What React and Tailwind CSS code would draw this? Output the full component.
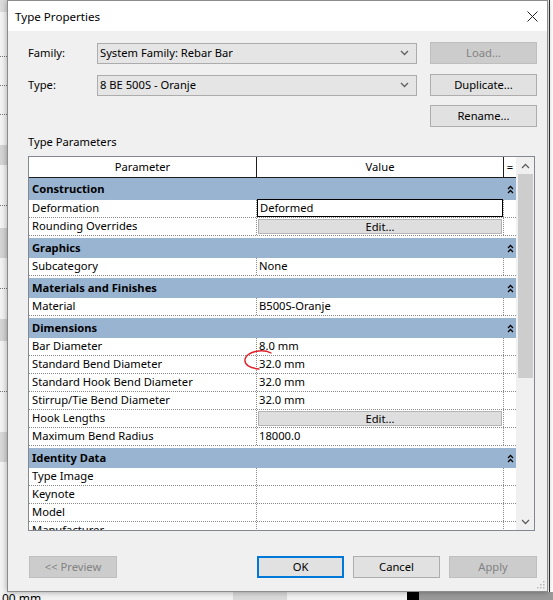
import React from 'react';

const groups = [
  {
    name: 'Construction',
    rows: [
      { p: 'Deformation', v: 'Deformed', kind: 'box' },
      { p: 'Rounding Overrides', kind: 'edit' },
    ],
  },
  { name: 'Graphics', rows: [{ p: 'Subcategory', v: 'None' }] },
  { name: 'Materials and Finishes', rows: [{ p: 'Material', v: 'B500S-Oranje' }] },
  {
    name: 'Dimensions',
    rows: [
      { p: 'Bar Diameter', v: '8.0 mm' },
      { p: 'Standard Bend Diameter', v: '32.0 mm' },
      { p: 'Standard Hook Bend Diameter', v: '32.0 mm' },
      { p: 'Stirrup/Tie Bend Diameter', v: '32.0 mm' },
      { p: 'Hook Lengths', kind: 'edit' },
      { p: 'Maximum Bend Radius', v: '18000.0' },
    ],
  },
  {
    name: 'Identity Data',
    rows: [{ p: 'Type Image' }, { p: 'Keynote' }, { p: 'Model' }, { p: 'Manufacturer' }],
  },
];

function Chevron({ down }) {
  return (
    <svg width="9" height="6" viewBox="0 0 9 6" className="text-[#606060]">
      <path
        d={down ? 'M1 1 L4.5 4.5 L8 1' : 'M1 5 L4.5 1.5 L8 5'}
        fill="none"
        stroke="currentColor"
        strokeWidth="1.3"
      />
    </svg>
  );
}

function DoubleUp() {
  return (
    <svg width="7" height="9" viewBox="0 0 7 9" className="text-black">
      <path d="M1 4 L3.5 1.5 L6 4 M1 8 L3.5 5.5 L6 8" fill="none" stroke="currentColor" strokeWidth="1.3" />
    </svg>
  );
}

function Combo({ text }) {
  return (
    <div className="w-[320px] h-[21px] bg-[#e5e5e5] border border-[#acacac] flex items-center pl-[2px] pr-[7px]">
      <span className="flex-1">{text}</span>
      <Chevron down />
    </div>
  );
}

function Btn({ children, disabled, primary, className = '' }) {
  const base = disabled
    ? 'bg-[#cccccc] border border-[#bfbfbf] text-[#838383]'
    : primary
    ? 'bg-[#e1e1e1] border-2 border-[#0078d7] text-black'
    : 'bg-[#e1e1e1] border border-[#adadad] text-black';
  return (
    <div className={`h-[22px] flex items-center justify-center ${base} ${className}`}>{children}</div>
  );
}

function Row({ row }) {
  return (
    <div className="flex h-[18px] border-b border-dotted border-[#8a8a8a] bg-white">
      <div className="w-[228px] pl-[3px] leading-[16px] border-r border-dotted border-[#8a8a8a] whitespace-nowrap">
        {row.p}
      </div>
      <div className="w-[247px] border-r border-dotted border-[#8a8a8a] relative">
        {row.kind === 'box' && (
          <div className="absolute inset-x-0 -top-px h-[18px] border border-black pl-[2px] leading-[15px] bg-white">
            {row.v}
          </div>
        )}
        {row.kind === 'edit' && (
          <div className="absolute left-[1px] right-[1px] top-[1px] h-[15px] bg-[#dedede] border border-[#b4b4b4] flex items-center justify-center leading-none">
            Edit...
          </div>
        )}
        {!row.kind && <div className="pl-[2px] leading-[16px]">{row.v}</div>}
      </div>
      <div className="w-[12px]" />
    </div>
  );
}

function Group({ group, first }) {
  return (
    <div>
      <div
        className={`h-[22px] bg-[#99b4d1] flex items-center font-bold pl-[3px] pt-[1px] ${
          first ? '' : 'border-t-2 border-white'
        }`}
      >
        <span className="flex-1">{group.name}</span>
        <span className="w-[12px] flex justify-center">
          <DoubleUp />
        </span>
      </div>
      {group.rows.map((r) => (
        <Row key={r.p} row={r} />
      ))}
    </div>
  );
}

export default function App() {
  return (
    <div className="relative w-[553px] h-[600px] overflow-hidden bg-white font-['Noto_Sans',sans-serif] text-[11.2px] text-black">
      {/* application behind the dialog */}
      <div className="absolute left-0 top-0 w-[7px] h-[600px] bg-[#f4f4f4]">
        <div className="h-[12px] bg-[#dcdcdc]" />
        <div className="mt-[44px] border-t border-dotted border-[#777]" />
        <div className="mt-[28px] border-t border-dotted border-[#777]" />
        <div className="mt-[28px] border-t border-dotted border-[#777]" />
        <div className="mt-[30px] h-[20px] bg-[#d4d4d4]" />
        <div className="mt-[40px] border-t border-dotted border-[#777]" />
        <div className="mt-[22px] h-[30px] bg-[#d4d4d4]" />
        <div className="mt-[30px] border-t border-dotted border-[#777]" />
        <div className="mt-[30px] h-[22px] bg-[#d4d4d4]" />
        <div className="mt-[50px] border-t border-dotted border-[#777]" />
        <div className="mt-[40px] h-[30px] bg-[#d8d8d8]" />
      </div>
      <div className="absolute right-0 top-0 w-[6px] h-[600px] bg-white border-l border-[#f0f0f0]">
        <div className="ml-[1px] h-[600px] border-l border-[#333]" />
      </div>
      <div className="absolute left-0 top-[592px] w-[553px] h-[8px] bg-[#f2f2f2] flex items-start overflow-hidden">
        <span className="text-[12px] leading-[14px] pl-[2px]">00 mm )</span>
        <div className="ml-[190px] w-[60px] h-[8px] bg-[#d9d9d9]" />
        <div className="ml-[120px] w-[14px] h-[8px] bg-black" />
        <div className="w-[150px] h-[8px] bg-[#9a9a9a]" />
      </div>

      {/* dialog */}
      <div className="absolute left-[7px] top-0 w-[541px] h-[592px] bg-[#f0f0f0] border border-[#8c8c8c] shadow-[0_0_6px_rgba(0,0,0,0.35)] flex flex-col">
        <div className="h-[30px] bg-white flex items-center pl-[7px] pr-[9px] shrink-0">
          <span className="flex-1 pt-[1px] text-[11.6px]">Type Properties</span>
          <svg width="11" height="11" viewBox="0 0 11 11">
            <path d="M0.5 0.5 L10.5 10.5 M10.5 0.5 L0.5 10.5" stroke="#222" strokeWidth="1" />
          </svg>
        </div>

        <div className="flex flex-col pl-[20px] pr-[10px]">
          <div className="mt-[11px] flex items-center h-[22px]">
            <span className="w-[69px]">Family:</span>
            <Combo text="System Family: Rebar Bar" />
            <Btn disabled className="ml-auto w-[107px]">Load...</Btn>
          </div>
          <div className="mt-[10px] flex items-center h-[22px]">
            <span className="w-[69px]">Type:</span>
            <Combo text="8 BE 500S - Oranje" />
            <Btn className="ml-auto w-[107px]">Duplicate...</Btn>
          </div>
          <div className="mt-[9px] flex justify-end">
            <Btn className="w-[107px]">Rename...</Btn>
          </div>

          <div className="mt-[7px] h-[16px] leading-[16px]">Type Parameters</div>

          <div className="mt-[6px] w-[507px] h-[375px] border border-[#828790] flex bg-white">
            <div className="w-[487px] flex flex-col overflow-hidden">
              <div className="h-[21px] shrink-0 flex border-b border-[#1e1e1e] bg-white">
                <div className="w-[228px] border-r border-[#1e1e1e] flex items-center justify-center">Parameter</div>
                <div className="w-[247px] border-r border-[#1e1e1e] flex items-center justify-center">Value</div>
                <div className="w-[12px] flex items-center justify-center leading-none">=</div>
              </div>
              <div className="flex-1 overflow-hidden">
                {groups.map((g, i) => (
                  <Group key={g.name} group={g} first={i === 0} />
                ))}
              </div>
            </div>
            <div className="w-[18px] bg-[#f0f0f0] flex flex-col border-l border-[#f0f0f0]">
              <div className="h-[17px] flex items-center justify-center shrink-0">
                <Chevron />
              </div>
              <div className="h-[204px] mx-[1px] bg-[#cdcdcd] shrink-0" />
              <div className="flex-1" />
              <div className="h-[17px] flex items-center justify-center shrink-0">
                <Chevron down />
              </div>
            </div>
          </div>

          <div className="mt-[25px] flex items-center">
            <Btn disabled className="ml-[1px] w-[88px]">&lt;&lt; Preview</Btn>
            <Btn primary className="ml-auto w-[87px]">OK</Btn>
            <Btn className="ml-[9px] w-[87px]">Cancel</Btn>
            <Btn disabled className="ml-[9px] w-[88px]">Apply</Btn>
          </div>
        </div>

        <svg className="absolute right-[2px] bottom-[2px]" width="8" height="8" viewBox="0 0 8 8">
          <g fill="#b8b8b8">
            <rect x="6" y="0" width="1.5" height="1.5" />
            <rect x="3" y="3" width="1.5" height="1.5" />
            <rect x="6" y="3" width="1.5" height="1.5" />
            <rect x="0" y="6" width="1.5" height="1.5" />
            <rect x="3" y="6" width="1.5" height="1.5" />
            <rect x="6" y="6" width="1.5" height="1.5" />
          </g>
        </svg>
      </div>

      {/* red hand-drawn mark */}
      <svg className="absolute left-0 top-0 pointer-events-none" width="553" height="600">
        <path
          d="M271 353 C 262 348, 247 352, 245 359 C 244 365, 250 368, 259 369"
          fill="none"
          stroke="#e0202a"
          strokeWidth="1.4"
          strokeLinecap="round"
        />
      </svg>
    </div>
  );
}
